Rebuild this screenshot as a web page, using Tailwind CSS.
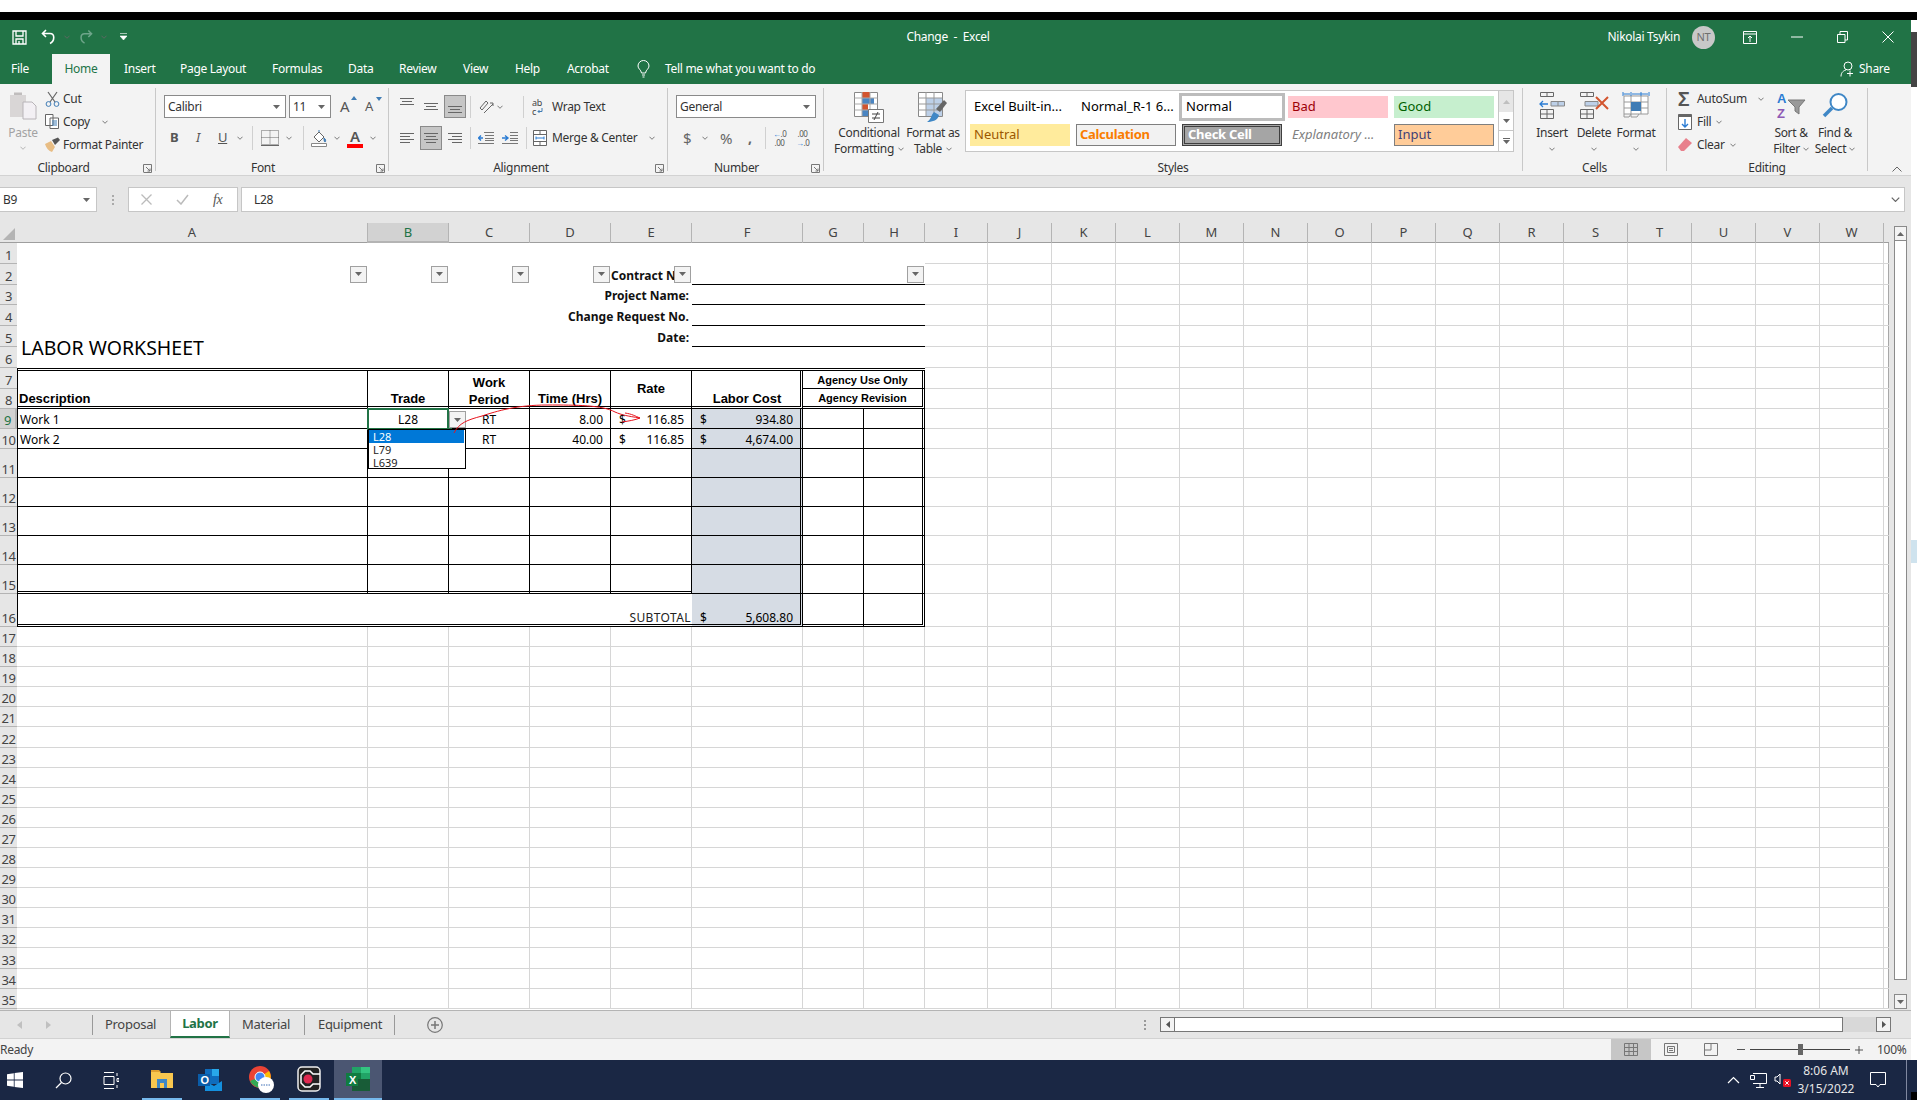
<!DOCTYPE html>
<html lang="en">
<head>
<meta charset="utf-8">
<title>Change - Excel</title>
<script src="https://cdn.jsdelivr.net/npm/@tailwindcss/browser@4"></script>
</head>
<body class="bg-white overflow-hidden font-['Noto_Sans',sans-serif] text-[12px] text-[#333] tracking-[-0.3px]">
<svg class="hidden">
  <symbol id="chev" viewBox="0 0 7 4"><path d="M.5.5 3.5 3.5 6.5.5" fill="none" stroke="#666"/></symbol>
  <symbol id="launch" viewBox="0 0 9 9"><path d="M.5 8V.5H8.5V8.500H.5M3 3 7 7M7 4.500V7H4.500" fill="none" stroke="#777"/></symbol>
  <symbol id="tri" viewBox="0 0 7 4"><path d="M0 0H7L3.500 4Z" fill="#666"/></symbol>
  <symbol id="lines" viewBox="0 0 14 8"><path d="M0 .5H14M2 3.500H12M0 6.500H14" stroke="#666"/></symbol>
</svg>

<div class="flex h-[1060px]">
  <div class="w-[1911px] flex flex-col">
    <div class="h-[12px] bg-white"></div>
    <div class="h-[8px] bg-black"></div>

    <!-- title bar -->
    <header class="h-[34px] bg-[#217346] text-white flex items-center relative">
      <svg class="ml-[12px] w-[15px] h-[15px]" viewBox="0 0 15 15"><path d="M1 1H14V14H1Z M4 1V6H11V1M4 14V9H11V14M7 11V14" fill="none" stroke="#fff" stroke-width="1.300"/></svg>
      <svg class="ml-[14px] w-[16px] h-[16px]" viewBox="0 0 16 16"><path d="M5 1 1.500 4.500 5 8M2 4.500H9C14 4.500 14 12 9 14.500" fill="none" stroke="#fff" stroke-width="1.600"/></svg>
      <svg class="ml-[7px] w-[6px] h-[4px]"><use href="#chev"/></svg>
      <svg class="ml-[8px] w-[15px] h-[16px]" viewBox="0 0 16 16"><path d="M11 1 14.500 4.500 11 8M14 4.500H7C2 4.500 2 12 7 14.500" fill="none" stroke="#6ea58a" stroke-width="1.600"/></svg>
      <svg class="ml-[8px] w-[6px] h-[4px]"><use href="#chev"/></svg>
      <svg class="ml-[13px] w-[7px] h-[8px]" viewBox="0 0 7 8"><path d="M0 .5H7M0 3H7L3.500 7Z" fill="#fff" stroke="#fff" stroke-width=".6"/></svg>
      <div class="ml-[736px] w-[170px] text-center">Change&nbsp; -&nbsp; Excel</div>
      <div class="ml-[572px] w-[75px] text-right whitespace-nowrap">Nikolai Tsykin</div>
      <div class="ml-[12px] w-[23px] h-[23px] rounded-full bg-[#c8c8c8] text-[#6f6f6f] text-[11px] flex items-center justify-center">NT</div>
      <svg class="ml-[28px] w-[14px] h-[13px]" viewBox="0 0 14 13"><path d="M.5.5H13.500V12.500H.5ZM.5 3H13.500M7 11V5M5 7 7 5 9 7" fill="none" stroke="#fff"/></svg>
      <svg class="ml-[34px] w-[12px] h-[2px]" viewBox="0 0 12 2"><path d="M0 1H12" stroke="#fff"/></svg>
      <svg class="ml-[34px] w-[11px] h-[12px]" viewBox="0 0 11 12"><path d="M.5 3.500H8V11.500H.5ZM3 3.500V.5H10.500V9H8" fill="none" stroke="#fff"/></svg>
      <svg class="ml-[34px] w-[12px] h-[12px]" viewBox="0 0 12 12"><path d="M.5.5 11.500 11.500M11.500.5.5 11.500" stroke="#fff"/></svg>
    </header>

    <!-- ribbon tabs -->
    <nav class="h-[30px] bg-[#217346] text-white flex items-center">
      <span class="ml-[11px] w-[18px]">File</span>
      <span class="ml-[23px] w-[58px] h-full bg-[#f3f3f3] text-[#217346] flex items-center justify-center">Home</span>
      <span class="ml-[14px] w-[29px]">Insert</span>
      <span class="ml-[27px] w-[65px] whitespace-nowrap">Page Layout</span>
      <span class="ml-[27px] w-[49px]">Formulas</span>
      <span class="ml-[27px] w-[24px]">Data</span>
      <span class="ml-[27px] w-[37px]">Review</span>
      <span class="ml-[27px] w-[25px]">View</span>
      <span class="ml-[27px] w-[25px]">Help</span>
      <span class="ml-[27px] w-[43px]">Acrobat</span>
      <svg class="ml-[27px] w-[13px] h-[18px]" viewBox="0 0 13 18"><path d="M4.500 13C4 9.500 1 9 1 6a5.500 5.500 0 0 1 11 0C12 9 9 9.500 8.500 13ZM5 15H8M5.500 17H7.500" fill="none" stroke="#fff"/></svg>
      <span class="ml-[15px] w-[150px] whitespace-nowrap">Tell me what you want to do</span>
      <svg class="ml-[1025px] w-[15px] h-[16px]" viewBox="0 0 15 16"><circle cx="8" cy="5" r="4" fill="none" stroke="#fff"/><path d="M1 15.500C1 11 4 9.500 6 9M10 9.500V15.500M7 12.500H13" fill="none" stroke="#fff"/></svg>
      <span class="ml-[4px] w-[30px]">Share</span>
    </nav>

    <!-- ribbon -->
    <section class="h-[92px] bg-[#f3f3f3] border-b border-[#d2d2d2] py-[4px] flex">
      <!-- Clipboard -->
      <div class="w-[156px] border-r border-[#c8c8c8] flex flex-col">
        <div class="flex-1 flex -mt-[1px]">
          <div class="ml-[6px] w-[34px] flex flex-col items-center pt-[4px]">
            <svg class="w-[30px] h-[32px]" viewBox="0 0 30 32"><path d="M2 4H18V26H2Z" fill="#d9d6d6"/><path d="M6 4H14V1.500H6Z" fill="#c0bdbd"/><path d="M15 11H24L28 15V28H15Z" fill="#f3f0f4" stroke="#b8b4b8"/></svg>
            <span class="text-[#a3a3a3] leading-[14px] mt-[3px]">Paste</span>
            <svg class="w-[6px] h-[4px] mt-[6px] opacity-50"><use href="#chev"/></svg>
          </div>
          <div class="ml-[5px] flex flex-col">
            <div class="h-[23px] flex items-center">
              <svg class="w-[15px] h-[16px]" viewBox="0 0 15 16"><path d="M3 1 10 11M12 1 5 11" stroke="#666" stroke-width="1.200"/><circle cx="3.500" cy="13" r="2.400" fill="none" stroke="#3f7cb5"/><circle cx="11.500" cy="13" r="2.400" fill="none" stroke="#3f7cb5"/></svg>
              <span class="ml-[3px]">Cut</span>
            </div>
            <div class="h-[23px] flex items-center">
              <svg class="w-[14px] h-[15px]" viewBox="0 0 14 15"><path d="M.5.5H8V11.500H.5ZM5 4H13.500V14.500H5Z" fill="#fff" stroke="#666"/><path d="M7 7H12M7 9H12M7 11H12" stroke="#3f7cb5"/></svg>
              <span class="ml-[4px]">Copy</span>
              <svg class="ml-[12px] w-[6px] h-[4px]"><use href="#chev"/></svg>
            </div>
            <div class="h-[23px] flex items-center">
              <svg class="w-[16px] h-[15px]" viewBox="0 0 16 15"><path d="M0 7 6 4 10 10 7 15C4 14 1 11 0 7Z" fill="#e8bd84"/><path d="M7 3 13 .5 15 3 10 8Z" fill="#555"/></svg>
              <span class="ml-[2px] whitespace-nowrap">Format Painter</span>
            </div>
          </div>
        </div>
        <div class="relative h-[14px] leading-[22px] text-center pr-[28px]">Clipboard<svg class="absolute right-[3px] top-[7px] w-[9px] h-[9px]"><use href="#launch"/></svg></div>
      </div>

      <!-- Font -->
      <div class="w-[233px] border-r border-[#c8c8c8] flex flex-col">
        <div class="flex-1 pt-[7px] pl-[8px]">
          <div class="flex h-[23px] items-center">
            <div class="w-[122px] h-[23px] bg-white border border-[#8a8a8a] flex items-center justify-between px-[3px]"><span>Calibri</span><svg class="w-[7px] h-[4px] mr-[2px]"><use href="#tri"/></svg></div>
            <div class="ml-[3px] w-[42px] h-[23px] bg-white border border-[#8a8a8a] flex items-center justify-between px-[3px]"><span>11</span><svg class="w-[7px] h-[4px] mr-[2px]"><use href="#tri"/></svg></div>
            <span class="ml-[9px] w-[14px] text-[15px] text-[#555] leading-none relative">A<span class="absolute -top-[3px] -right-[3px] border-x-[3px] border-x-transparent border-b-[4px] border-b-[#3f7cb5]"></span></span>
            <span class="ml-[11px] w-[14px] text-[13px] text-[#555] leading-none relative">A<span class="absolute -top-[3px] -right-[3px] border-x-[3px] border-x-transparent border-t-[4px] border-t-[#3f7cb5]"></span></span>
          </div>
          <div class="flex h-[24px] mt-[8px] items-center">
            <span class="ml-[6px] w-[10px] font-bold text-[13px] text-[#555]">B</span>
            <span class="ml-[16px] w-[8px] italic text-[13px] text-[#555]">I</span>
            <span class="ml-[14px] w-[10px] underline text-[13px] text-[#555]">U</span>
            <svg class="ml-[9px] w-[6px] h-[4px]"><use href="#chev"/></svg>
            <span class="ml-[9px] w-px h-[24px] bg-[#d0d0d0]"></span>
            <svg class="ml-[8px] w-[18px] h-[16px]" viewBox="0 0 18 16"><path d="M.5.5H17.500V14.500H.5ZM9 .5V14.500M.5 7.500H17.500" fill="none" stroke="#666" stroke-dasharray="1 1"/><path d="M0 15.500H18" stroke="#666"/></svg>
            <svg class="ml-[7px] w-[6px] h-[4px]"><use href="#chev"/></svg>
            <span class="ml-[11px] w-px h-[24px] bg-[#d0d0d0]"></span>
            <svg class="ml-[7px] w-[16px] h-[18px]" viewBox="0 0 16 18"><path d="M3 8 8 3 13 8 8 13Z" fill="#fff" stroke="#666"/><path d="M8 3V1M13 9C15 10 15 13 14 13 13 13 13 10 13 9Z" stroke="#3f7cb5" fill="#3f7cb5"/><path d="M.5 14.500H15.500V17.500H.5Z" fill="#fff" stroke="#888"/></svg>
            <svg class="ml-[7px] w-[6px] h-[4px]"><use href="#chev"/></svg>
            <span class="ml-[7px] w-[16px] h-[20px] relative text-center text-[15px] leading-[17px] font-semibold text-[#555]">A<span class="absolute left-0 right-0 bottom-0 h-[4px] bg-[#f00]"></span></span>
            <svg class="ml-[7px] w-[6px] h-[4px]"><use href="#chev"/></svg>
          </div>
        </div>
        <div class="relative h-[14px] leading-[22px] text-center pr-[18px]">Font<svg class="absolute right-[3px] top-[7px] w-[9px] h-[9px]"><use href="#launch"/></svg></div>
      </div>

      <!-- Alignment -->
      <div class="w-[279px] border-r border-[#c8c8c8] flex flex-col">
        <div class="flex-1 pt-[7px] pl-[11px]">
          <div class="flex h-[23px] items-center">
            <svg class="w-[14px] h-[8px] self-start mt-[3px]"><use href="#lines"/></svg>
            <svg class="ml-[10px] w-[14px] h-[8px]"><use href="#lines"/></svg>
            <span class="ml-[6px] w-[22px] h-[23px] bg-[#c6c6c6] border border-[#8a8a8a] flex items-end justify-center pb-[3px]"><svg class="w-[14px] h-[8px]"><use href="#lines"/></svg></span>
            <span class="ml-[4px] w-px h-[22px] bg-[#d0d0d0]"></span>
            <svg class="ml-[8px] w-[15px] h-[16px]" viewBox="0 0 15 16"><path d="M1 9 7 2 9 4 3 11ZM5 14 14 5M11 4H14V7" fill="none" stroke="#666"/></svg>
            <svg class="ml-[3px] w-[6px] h-[4px]"><use href="#chev"/></svg>
            <span class="ml-[20px] w-px h-[22px] bg-[#d0d0d0]"></span>
            <span class="ml-[8px] w-[13px] text-[9px] leading-[9px] text-[#444] flex flex-col"><span>ab</span><span class="flex items-center">c<svg class="ml-[1px] w-[6px] h-[6px]" viewBox="0 0 6 6"><path d="M5 0V3.500H1M2.500 2 1 3.500 2.500 5" fill="none" stroke="#3f7cb5"/></svg></span></span>
            <span class="ml-[7px] whitespace-nowrap">Wrap Text</span>
          </div>
          <div class="flex h-[24px] mt-[8px] items-center">
            <svg class="w-[14px] h-[10px]" viewBox="0 0 14 10"><path d="M0 .5H14M0 3.500H10M0 6.500H14M0 9.500H10" stroke="#666"/></svg>
            <span class="ml-[6px] w-[22px] h-[24px] bg-[#c6c6c6] border border-[#8a8a8a] flex items-center justify-center"><svg class="w-[14px] h-[10px]" viewBox="0 0 14 10"><path d="M0 .5H14M2 3.500H12M0 6.500H14M2 9.500H12" stroke="#666"/></svg></span>
            <svg class="ml-[6px] w-[14px] h-[10px]" viewBox="0 0 14 10"><path d="M0 .5H14M4 3.500H14M0 6.500H14M4 9.500H14" stroke="#666"/></svg>
            <span class="ml-[8px] w-px h-[22px] bg-[#d0d0d0]"></span>
            <svg class="ml-[7px] w-[16px] h-[12px]" viewBox="0 0 16 12"><path d="M6 .5H16M7 3.500H16M7 6.500H16M7 8.500H16M0 11.500H16" stroke="#777"/><path d="M5 6H1M3 3.500.5 6 3 8.500" fill="none" stroke="#2b7cd3" stroke-width="1.400"/></svg>
            <svg class="ml-[8px] w-[16px] h-[12px]" viewBox="0 0 16 12"><path d="M8 .5H16M8 3.500H16M8 6.500H16M8 8.500H16M0 11.500H16" stroke="#777"/><path d="M0 6H5M3 3.500 6 6 3 8.500" fill="none" stroke="#2b7cd3" stroke-width="1.400"/></svg>
            <span class="ml-[8px] w-px h-[22px] bg-[#d0d0d0]"></span>
            <svg class="ml-[6px] w-[14px] h-[16px]" viewBox="0 0 14 16"><path d="M.5.5H13.500V15.500H.5ZM.5 4.500H13.500M.5 11.500H13.500M7 .5V4.500M7 11.500V15.500" fill="#fff" stroke="#666"/><path d="M3 8H11M3 6.500V9.500M11 6.500V9.500" stroke="#2b7cd3"/></svg>
            <span class="ml-[5px] whitespace-nowrap">Merge &amp; Center</span>
            <svg class="ml-[12px] w-[6px] h-[4px]"><use href="#chev"/></svg>
          </div>
        </div>
        <div class="relative h-[14px] leading-[22px] text-center pr-[14px]">Alignment<svg class="absolute right-[3px] top-[7px] w-[9px] h-[9px]"><use href="#launch"/></svg></div>
      </div>

      <!-- Number -->
      <div class="w-[156px] border-r border-[#c8c8c8] flex flex-col">
        <div class="flex-1 pt-[7px] pl-[8px]">
          <div class="w-[140px] h-[23px] bg-white border border-[#8a8a8a] flex items-center justify-between px-[3px]"><span>General</span><svg class="w-[7px] h-[4px] mr-[2px]"><use href="#tri"/></svg></div>
          <div class="flex h-[24px] mt-[8px] items-center">
            <span class="ml-[7px] w-[8px] text-[15px] text-[#666]">$</span>
            <svg class="ml-[11px] w-[6px] h-[4px]"><use href="#chev"/></svg>
            <span class="ml-[12px] w-[14px] text-[15px] text-[#666]">%</span>
            <span class="ml-[14px] w-[6px] font-bold text-[14px] leading-[14px] text-[#666]">,</span>
            <span class="ml-[11px] w-px h-[22px] bg-[#d0d0d0]"></span>
            <span class="ml-[7px] w-[15px] text-[8px] leading-[9px] tracking-[-0.5px] text-[#555] whitespace-nowrap"><span class="text-[#2b7cd3] font-bold">←</span>.0<br>&nbsp;.00</span>
            <span class="ml-[8px] w-[15px] text-[8px] leading-[9px] tracking-[-0.5px] text-[#555] whitespace-nowrap">&nbsp;.00<br><span class="text-[#2b7cd3] font-bold">→</span>.0</span>
          </div>
        </div>
        <div class="relative h-[14px] leading-[22px] text-center pr-[18px]">Number<svg class="absolute right-[3px] top-[7px] w-[9px] h-[9px]"><use href="#launch"/></svg></div>
      </div>

      <!-- Styles -->
      <div class="w-[699px] border-r border-[#c8c8c8] flex flex-col">
        <div class="flex-1 flex">
          <div class="ml-[13px] w-[64px] flex flex-col items-center leading-[16px] pt-[4px]">
            <svg class="w-[30px] h-[31px]" viewBox="0 0 30 31"><path d="M.5.5H23.500V24.500H.5Z" fill="#fff" stroke="#888"/><path d="M8 0H16V6H8Z" fill="#d2552f"/><path d="M8 6H20V12H8Z" fill="#4a85c2"/><path d="M8 12H14V18H8Z" fill="#d2552f"/><path d="M8 18H17V24H8Z" fill="#4a85c2"/><path d="M.5 6H23.500M.5 12H23.500M.5 18H23.500M8 0V24M16 0V24" stroke="#aaa" fill="none"/><path d="M14.500 17.500H29.500V30.500H14.500Z" fill="#fff" stroke="#777"/><path d="M18 22H26M18 26H26M24 20 20 28" stroke="#444" fill="none"/></svg>
            <span class="mt-[2px] whitespace-nowrap">Conditional</span>
            <span class="whitespace-nowrap flex items-center">Formatting<svg class="ml-[4px] w-[6px] h-[4px]"><use href="#chev"/></svg></span>
          </div>
          <div class="w-[64px] flex flex-col items-center leading-[16px] pt-[4px]">
            <svg class="w-[30px] h-[31px]" viewBox="0 0 30 31"><path d="M.5.5H24.500V24.500H.5Z" fill="#fff" stroke="#888"/><path d="M8 6H24V24H8Z" fill="#bdd0e8"/><path d="M.5 6H24.500M.5 12H24.500M.5 18H24.500M8 0V24M16 0V24" stroke="#999" fill="none"/><path d="M18 17 26 8 29 11 22 20Z" fill="#666"/><path d="M16 20 21 23C20 28 15 30 9 30 13 28 13 23 16 20Z" fill="#3f87c6"/></svg>
            <span class="mt-[2px] whitespace-nowrap">Format as</span>
            <span class="whitespace-nowrap flex items-center">Table<svg class="ml-[4px] w-[6px] h-[4px]"><use href="#chev"/></svg></span>
          </div>
          <div class="h-[62px] mt-[2px] flex border border-[#c6c6c6] bg-white tracking-normal">
            <div class="w-[532px] px-[4px] pt-[5px] grid grid-cols-[100px_100px_100px_100px_100px] grid-rows-[22px_22px] gap-x-[6px] gap-y-[6px] text-[13px] text-[#222]">
              <div class="flex items-center px-[4px] text-black whitespace-nowrap">Excel Built-in...</div>
              <div class="flex items-center pl-[5px] text-black whitespace-nowrap">Normal_R-1 6...</div>
              <div class="flex items-center px-[4px] text-black bg-white outline outline-[3px] outline-[#bcbcbc]">Normal</div>
              <div class="flex items-center px-[4px] bg-[#ffc7ce] text-[#9c0006]">Bad</div>
              <div class="flex items-center px-[4px] bg-[#c6efce] text-[#006100]">Good</div>
              <div class="flex items-center px-[4px] bg-[#ffeb9c] text-[#9c5700]">Neutral</div>
              <div class="flex items-center px-[3px] bg-[#f2f2f2] border border-[#7f7f7f] text-[#fa7d00] font-bold tracking-[-0.3px]">Calculation</div>
              <div class="flex items-center px-[3px] bg-[#a5a5a5] border-[3px] border-double border-[#3f3f3f] text-white font-bold tracking-[-0.3px]">Check Cell</div>
              <div class="flex items-center px-[4px] italic text-[#7f7f7f] whitespace-nowrap">Explanatory ...</div>
              <div class="flex items-center px-[3px] bg-[#ffcc99] border border-[#7f7f7f] text-[#3f3f76]">Input</div>
            </div>
          </div>
          <div class="w-[15px] h-[62px] mt-[2px] border-y border-r border-[#c6c6c6] flex flex-col">
            <div class="h-[21px] bg-[#e6e6e6] flex items-center justify-center"><svg class="w-[7px] h-[4px] rotate-180 opacity-30"><use href="#tri"/></svg></div>
            <div class="h-[19px] bg-white flex items-center justify-center border-b border-[#c6c6c6]"><svg class="w-[7px] h-[4px]"><use href="#tri"/></svg></div>
            <div class="flex-1 bg-white flex flex-col items-center justify-center"><span class="w-[7px] h-px bg-[#666] mb-[1px]"></span><svg class="w-[7px] h-[4px]"><use href="#tri"/></svg></div>
          </div>
        </div>
        <div class="h-[14px] leading-[22px] text-center">Styles</div>
      </div>

      <!-- Cells -->
      <div class="w-[144px] border-r border-[#c8c8c8] flex flex-col">
        <div class="flex-1 flex pl-[8px] pt-[4px]">
          <div class="w-[42px] flex flex-col items-center">
            <svg class="w-[26px] h-[27px]" viewBox="0 0 26 27"><path d="M1.500.5H14.500V4.500H1.500ZM8 .5V4.500M1.500 17.500H14.500V26.500H1.500ZM1.500 22H14.500M8 17.500V26.500" fill="none" stroke="#666"/><path d="M12 9.500H25.500V14H12ZM19 9.500V14" fill="#bdd0e8" stroke="#888"/><path d="M9 12H1M4 9 1 12 4 15" fill="none" stroke="#2b7cd3" stroke-width="1.300"/></svg>
            <span class="leading-[16px] mt-[6px]">Insert</span>
            <svg class="w-[6px] h-[4px] mt-[6px]"><use href="#chev"/></svg>
          </div>
          <div class="w-[42px] flex flex-col items-center">
            <svg class="w-[30px] h-[27px]" viewBox="0 0 30 27"><path d="M1.500.5H14.500V4.500H1.500ZM8 .5V4.500M1.500 17.500H14.500V26.500H1.500ZM1.500 22H14.500M8 17.500V26.500" fill="none" stroke="#666"/><path d="M6 9.500H19V14H6Z" fill="#bdd0e8" stroke="#888"/><path d="M17 5 29 17M29 5 17 17" stroke="#d2552f" stroke-width="2"/></svg>
            <span class="leading-[16px] mt-[6px]">Delete</span>
            <svg class="w-[6px] h-[4px] mt-[6px]"><use href="#chev"/></svg>
          </div>
          <div class="w-[42px] flex flex-col items-center">
            <svg class="w-[28px] h-[27px]" viewBox="0 0 28 27"><path d="M2 4H26V22H2ZM2 10H26M2 16H26M9 4V22M19 4V22" fill="#fff" stroke="#999"/><path d="M9 10H19V19H9Z" fill="#3f7cb5"/><path d="M1 0V4M9 0V4M1.500 2H8" stroke="#2b7cd3" fill="none"/><path d="M19 0V4M27 0V4M10 2H26" stroke="#2b7cd3" fill="none"/><path d="M2 22V25H7L9 22V25H15L17 22" fill="none" stroke="#999"/></svg>
            <span class="leading-[16px] mt-[6px]">Format</span>
            <svg class="w-[6px] h-[4px] mt-[6px]"><use href="#chev"/></svg>
          </div>
        </div>
        <div class="h-[14px] leading-[22px] text-center">Cells</div>
      </div>

      <!-- Editing -->
      <div class="w-[201px] border-r border-[#c8c8c8] flex flex-col">
        <div class="flex-1 flex -mt-[1px] pl-[11px]">
          <div class="w-[91px] flex flex-col">
            <div class="h-[23px] flex items-center">
              <span class="w-[19px] text-[20px] leading-none text-[#555] font-semibold">Σ</span>
              <span>AutoSum</span>
              <svg class="ml-[11px] w-[6px] h-[4px]"><use href="#chev"/></svg>
            </div>
            <div class="h-[23px] flex items-center">
              <svg class="w-[14px] h-[16px] mr-[5px]" viewBox="0 0 14 16"><path d="M.5.5H13.500V15.500H.5Z" fill="#fff" stroke="#666"/><path d="M.5.5H13.500V3H.5Z" fill="#666"/><path d="M7 5V13M4 10 7 13 10 10" fill="none" stroke="#2b7cd3" stroke-width="1.400"/></svg>
              <span>Fill</span>
              <svg class="ml-[5px] w-[6px] h-[4px]"><use href="#chev"/></svg>
            </div>
            <div class="h-[23px] flex items-center">
              <svg class="w-[14px] h-[13px] mr-[5px]" viewBox="0 0 14 13"><path d="M0 9 8 0 14 5 6 13H3Z" fill="#e8808c"/></svg>
              <span>Clear</span>
              <svg class="ml-[5px] w-[6px] h-[4px]"><use href="#chev"/></svg>
            </div>
          </div>
          <div class="w-[44px] flex flex-col items-center pt-[5px]">
            <svg class="w-[30px] h-[27px]" viewBox="0 0 30 27"><text x="1" y="11" font-size="13" font-weight="700" fill="#2b7cd3" font-family="Liberation Sans">A</text><text x="1" y="26" font-size="13" font-weight="700" fill="#8e5ab5" font-family="Liberation Sans">Z</text><path d="M12 8H29L23 15V22L19 19V15Z" fill="#999" stroke="#777"/></svg>
            <span class="leading-[16px] mt-[6px] whitespace-nowrap">Sort &amp;</span>
            <span class="leading-[16px] whitespace-nowrap flex items-center">Filter<svg class="ml-[3px] w-[6px] h-[4px]"><use href="#chev"/></svg></span>
          </div>
          <div class="w-[44px] flex flex-col items-center pt-[5px]">
            <svg class="w-[27px] h-[27px]" viewBox="0 0 27 27"><circle cx="16.500" cy="10" r="8" fill="#fff" stroke="#3f87c6" stroke-width="2"/><path d="M10 16 2 24" stroke="#3f87c6" stroke-width="3.500"/></svg>
            <span class="leading-[16px] mt-[6px] whitespace-nowrap">Find &amp;</span>
            <span class="leading-[16px] whitespace-nowrap flex items-center">Select<svg class="ml-[3px] w-[6px] h-[4px]"><use href="#chev"/></svg></span>
          </div>
        </div>
        <div class="h-[14px] leading-[22px] text-center">Editing</div>
      </div>
      <div class="flex-1 flex items-end justify-center pl-[15px] -mb-[1px]"><svg class="w-[10px] h-[6px]" viewBox="0 0 10 6"><path d="M.5 5.500 5 1 9.500 5.500" fill="none" stroke="#666"/></svg></div>
    </section>

    <!-- formula bar -->
    <section class="h-[47px] bg-[#e6e6e6] pt-[11px] flex items-start">
      <div class="w-[97px] h-[25px] bg-white border border-[#c6c6c6] border-l-0 flex items-center justify-between pl-[3px] pr-[6px]"><span>B9</span><svg class="w-[7px] h-[4px]"><use href="#tri"/></svg></div>
      <div class="ml-[15px] w-[3px] h-[25px] flex flex-col justify-center gap-[2px]"><i class="w-[2px] h-[2px] bg-[#aaa]"></i><i class="w-[2px] h-[2px] bg-[#aaa]"></i><i class="w-[2px] h-[2px] bg-[#aaa]"></i></div>
      <div class="ml-[13px] w-[110px] h-[25px] bg-white border border-[#c6c6c6] flex items-center">
        <svg class="ml-[12px] w-[11px] h-[11px]" viewBox="0 0 11 11"><path d="M.5.5 10.500 10.500M10.500.5.5 10.500" stroke="#bbb" stroke-width="1.300"/></svg>
        <svg class="ml-[24px] w-[13px] h-[11px]" viewBox="0 0 13 11"><path d="M1 6 5 10 12 1" fill="none" stroke="#bbb" stroke-width="1.500"/></svg>
        <span class="ml-[24px] italic font-['Liberation_Serif',serif] text-[14px] text-[#555]">fx</span>
      </div>
      <div class="ml-[3px] w-[1664px] h-[25px] bg-white border border-[#c6c6c6] flex items-center justify-between pl-[12px] pr-[4px]"><span>L28</span><svg class="w-[9px] h-[5px]"><use href="#chev"/></svg></div>
    </section>

    <!-- sheet -->
    <section class="h-[787px] bg-[#e6e6e6] flex tracking-normal">
      <div class="w-[1889px] flex flex-col">
        <!-- column headers -->
        <div class="h-[20px] grid grid-cols-[17px_351px_81px_81px_81px_81px_111px_61px_61px_63px_repeat(14,64px)_5px] border-b border-[#9e9e9e] text-[13px] text-[#444] leading-[19px] text-center [&>*]:border-r [&>*]:border-[#b4b4b4]">
          <div class="flex items-end justify-end p-[3px] pr-[2px] !border-r-0"><i class="block w-0 h-0 border-l-[12px] border-l-transparent border-b-[12px] border-b-[#b4b4b4]"></i></div>
          <div>A</div>
          <div class="bg-[#d2d2d2] text-[#217346] border-b-2 border-b-[#217346] h-[20px]">B</div>
          <div>C</div><div>D</div><div>E</div><div>F</div><div>G</div><div>H</div><div>I</div><div>J</div><div>K</div><div>L</div><div>M</div><div>N</div><div>O</div><div>P</div><div>Q</div><div>R</div><div>S</div><div>T</div><div>U</div><div>V</div><div>W</div><div class="!border-r-0"></div>
        </div>
        <div class="flex flex-1">
          <!-- row headers -->
          <div class="w-[17px] grid grid-rows-[repeat(6,20.83px)_21px_20px_20px_20px_29px_29px_29px_29px_29px_33px_repeat(19,20.1px)] text-[13px] text-[#444] [&>*]:flex [&>*]:items-end [&>*]:justify-center [&>*]:leading-[16px] [&>*]:border-b [&>*]:border-[#b4b4b4] [&>*]:tracking-[-0.5px]">
            <div>1</div><div>2</div><div>3</div><div>4</div><div>5</div><div>6</div><div>7</div><div>8</div>
            <div class="bg-[#d2d2d2] text-[#217346] border-r-2 border-r-[#217346]">9</div>
            <div>10</div><div>11</div><div>12</div><div>13</div><div>14</div><div>15</div><div>16</div><div>17</div><div>18</div><div>19</div><div>20</div><div>21</div><div>22</div><div>23</div><div>24</div><div>25</div><div>26</div><div>27</div><div>28</div><div>29</div><div>30</div><div>31</div><div>32</div><div>33</div><div>34</div><div>35</div>
          </div>

          <!-- cells -->
          <div class="relative w-[1872px] bg-white grid grid-cols-[351px_81px_81px_81px_81px_111px_61px_61px_63px_repeat(14,64px)_5px] grid-rows-[repeat(6,20.83px)_21px_20px_20px_20px_29px_29px_29px_29px_29px_33px_repeat(19,20.1px)]">
            <!-- vertical gridlines -->
            <i class="row-span-full col-start-1 border-r border-[#d6d6d6]"></i><i class="row-span-full col-start-2 border-r border-[#d6d6d6]"></i><i class="row-span-full col-start-3 border-r border-[#d6d6d6]"></i><i class="row-span-full col-start-4 border-r border-[#d6d6d6]"></i><i class="row-span-full col-start-5 border-r border-[#d6d6d6]"></i><i class="row-span-full col-start-6 border-r border-[#d6d6d6]"></i><i class="row-span-full col-start-7 border-r border-[#d6d6d6]"></i><i class="row-span-full col-start-8 border-r border-[#d6d6d6]"></i><i class="row-span-full col-start-9 border-r border-[#d6d6d6]"></i><i class="row-span-full col-start-10 border-r border-[#d6d6d6]"></i><i class="row-span-full col-start-11 border-r border-[#d6d6d6]"></i><i class="row-span-full col-start-12 border-r border-[#d6d6d6]"></i><i class="row-span-full col-start-13 border-r border-[#d6d6d6]"></i><i class="row-span-full col-start-14 border-r border-[#d6d6d6]"></i><i class="row-span-full col-start-15 border-r border-[#d6d6d6]"></i><i class="row-span-full col-start-16 border-r border-[#d6d6d6]"></i><i class="row-span-full col-start-17 border-r border-[#d6d6d6]"></i><i class="row-span-full col-start-18 border-r border-[#d6d6d6]"></i><i class="row-span-full col-start-19 border-r border-[#d6d6d6]"></i><i class="row-span-full col-start-20 border-r border-[#d6d6d6]"></i><i class="row-span-full col-start-21 border-r border-[#d6d6d6]"></i><i class="row-span-full col-start-22 border-r border-[#d6d6d6]"></i><i class="row-span-full col-start-23 border-r border-[#d6d6d6]"></i><i class="row-span-full col-start-24 border-r border-[#a8a8a8]"></i>
            <!-- horizontal gridlines -->
            <i class="col-start-9 col-end-[-1] row-start-1 border-b border-[#d6d6d6]"></i><i class="col-start-9 col-end-[-1] row-start-2 border-b border-[#d6d6d6]"></i><i class="col-start-9 col-end-[-1] row-start-3 border-b border-[#d6d6d6]"></i><i class="col-start-9 col-end-[-1] row-start-4 border-b border-[#d6d6d6]"></i><i class="col-start-9 col-end-[-1] row-start-5 border-b border-[#d6d6d6]"></i><i class="col-start-9 col-end-[-1] row-start-6 border-b border-[#d6d6d6]"></i><i class="col-start-9 col-end-[-1] row-start-7 border-b border-[#d6d6d6]"></i><i class="col-start-9 col-end-[-1] row-start-8 border-b border-[#d6d6d6]"></i><i class="col-start-9 col-end-[-1] row-start-9 border-b border-[#d6d6d6]"></i><i class="col-start-9 col-end-[-1] row-start-10 border-b border-[#d6d6d6]"></i><i class="col-start-9 col-end-[-1] row-start-11 border-b border-[#d6d6d6]"></i><i class="col-start-9 col-end-[-1] row-start-12 border-b border-[#d6d6d6]"></i><i class="col-start-9 col-end-[-1] row-start-13 border-b border-[#d6d6d6]"></i><i class="col-start-9 col-end-[-1] row-start-14 border-b border-[#d6d6d6]"></i><i class="col-start-9 col-end-[-1] row-start-15 border-b border-[#d6d6d6]"></i><i class="col-start-9 col-end-[-1] row-start-16 border-b border-[#d6d6d6]"></i>
            <i class="col-span-full row-start-17 border-b border-[#d6d6d6]"></i><i class="col-span-full row-start-18 border-b border-[#d6d6d6]"></i><i class="col-span-full row-start-19 border-b border-[#d6d6d6]"></i><i class="col-span-full row-start-20 border-b border-[#d6d6d6]"></i><i class="col-span-full row-start-21 border-b border-[#d6d6d6]"></i><i class="col-span-full row-start-22 border-b border-[#d6d6d6]"></i><i class="col-span-full row-start-23 border-b border-[#d6d6d6]"></i><i class="col-span-full row-start-24 border-b border-[#d6d6d6]"></i><i class="col-span-full row-start-25 border-b border-[#d6d6d6]"></i><i class="col-span-full row-start-26 border-b border-[#d6d6d6]"></i><i class="col-span-full row-start-27 border-b border-[#d6d6d6]"></i><i class="col-span-full row-start-28 border-b border-[#d6d6d6]"></i><i class="col-span-full row-start-29 border-b border-[#d6d6d6]"></i><i class="col-span-full row-start-30 border-b border-[#d6d6d6]"></i><i class="col-span-full row-start-31 border-b border-[#d6d6d6]"></i><i class="col-span-full row-start-32 border-b border-[#d6d6d6]"></i><i class="col-span-full row-start-33 border-b border-[#d6d6d6]"></i><i class="col-span-full row-start-34 border-b border-[#d6d6d6]"></i><i class="col-span-full row-start-35 border-b border-[#d6d6d6]"></i>

            <!-- header form -->
            <div class="col-start-1 col-end-9 row-start-1 row-end-7 grid grid-cols-subgrid grid-rows-subgrid bg-white font-bold text-[12px] text-[#111]">
              <div class="col-start-5 row-start-2 whitespace-nowrap overflow-hidden flex items-center leading-none pt-[3px]">Contract No</div>
              <div class="col-start-4 col-end-6 row-start-3 text-right flex items-center justify-end pr-[3px] pt-[2px]">Project Name:</div>
              <div class="col-start-3 col-end-6 row-start-4 text-right flex items-center justify-end pr-[3px] pt-[2px]">Change Request No.</div>
              <div class="col-start-4 col-end-6 row-start-5 text-right flex items-center justify-end pr-[3px] pt-[2px]">Date:</div>
              <div class="col-start-6 col-end-9 row-start-2 border-b border-black"></div>
              <div class="col-start-6 col-end-9 row-start-3 border-b border-black"></div>
              <div class="col-start-6 col-end-9 row-start-4 border-b border-black"></div>
              <div class="col-start-6 col-end-9 row-start-5 border-b border-black"></div>
              <div class="col-start-1 row-start-5 row-span-2 flex items-center pl-[4px] pt-[1px] text-[19.5px] font-normal text-black whitespace-nowrap">LABOR WORKSHEET</div>
              <div class="col-start-1 row-start-2 justify-self-end self-center mr-[1px] w-[17px] h-[17px] bg-[#f3f3f3] border border-[#a0a0a0] flex items-center justify-center"><svg class="w-[7px] h-[4px]"><use href="#tri"/></svg></div>
              <div class="col-start-2 row-start-2 justify-self-end self-center mr-[1px] w-[17px] h-[17px] bg-[#f3f3f3] border border-[#a0a0a0] flex items-center justify-center"><svg class="w-[7px] h-[4px]"><use href="#tri"/></svg></div>
              <div class="col-start-3 row-start-2 justify-self-end self-center mr-[1px] w-[17px] h-[17px] bg-[#f3f3f3] border border-[#a0a0a0] flex items-center justify-center"><svg class="w-[7px] h-[4px]"><use href="#tri"/></svg></div>
              <div class="col-start-4 row-start-2 justify-self-end self-center mr-[1px] w-[17px] h-[17px] bg-[#f3f3f3] border border-[#a0a0a0] flex items-center justify-center"><svg class="w-[7px] h-[4px]"><use href="#tri"/></svg></div>
              <div class="col-start-5 row-start-2 justify-self-end self-center mr-[1px] w-[17px] h-[17px] bg-[#f3f3f3] border border-[#a0a0a0] flex items-center justify-center"><svg class="w-[7px] h-[4px]"><use href="#tri"/></svg></div>
              <div class="col-start-8 row-start-2 justify-self-end self-center mr-[1px] w-[17px] h-[17px] bg-[#f3f3f3] border border-[#a0a0a0] flex items-center justify-center"><svg class="w-[7px] h-[4px]"><use href="#tri"/></svg></div>
            </div>

            <!-- labor table -->
            <div class="col-start-1 col-end-9 row-start-7 row-end-17 grid grid-cols-subgrid grid-rows-subgrid bg-white border-l border-black border-t-[3px] border-double text-black [&>*]:border-r [&>*]:border-b [&>*]:border-black [&>*]:min-w-0">
              <div class="col-start-1 row-start-1 row-span-2 font-['Liberation_Sans',sans-serif] font-bold text-[13px] leading-[13px] flex items-end pl-[1px] pb-[1px] !border-b-[3px] !border-double">Description</div>
              <div class="col-start-2 row-start-1 row-span-2 font-['Liberation_Sans',sans-serif] font-bold text-[13px] leading-[13px] flex items-end justify-center pb-[1px] !border-b-[3px] !border-double">Trade</div>
              <div class="col-start-3 row-start-1 row-span-2 font-['Liberation_Sans',sans-serif] font-bold text-[13px] leading-[17px] text-center flex flex-col justify-end !border-b-[3px] !border-double"><span class="translate-y-[2px]">Work<br>Period</span></div>
              <div class="col-start-4 row-start-1 row-span-2 font-['Liberation_Sans',sans-serif] font-bold text-[13px] leading-[13px] flex items-end justify-center pb-[1px] !border-b-[3px] !border-double">Time (Hrs)</div>
              <div class="col-start-5 row-start-1 row-span-2 font-['Liberation_Sans',sans-serif] font-bold text-[13px] flex items-center justify-center !border-b-[3px] !border-double">Rate</div>
              <div class="col-start-6 row-start-1 row-span-2 font-['Liberation_Sans',sans-serif] font-bold text-[13px] leading-[13px] flex items-end justify-center pb-[1px] pl-[2px] !border-b-[3px] !border-double !border-r-[3px]">Labor Cost</div>
              <div class="col-start-7 col-end-9 row-start-1 font-['Liberation_Sans',sans-serif] font-bold text-[11px] flex items-center justify-center pt-[2px] !border-r-[3px] !border-double">Agency Use Only</div>
              <div class="col-start-7 col-end-9 row-start-2 font-['Liberation_Sans',sans-serif] font-bold text-[11px] flex items-center justify-center pt-[1px] !border-r-[3px] !border-b-[3px] !border-double">Agency Revision</div>

              <div class="flex items-center pl-[2px] pt-[3px] overflow-hidden">Work 1</div><div class="flex items-center justify-center pt-[3px]">L28</div><div class="flex items-center justify-center pt-[3px]">RT</div><div class="flex items-center justify-end pr-[7px] pt-[3px]">8.00</div><div class="flex items-center justify-between pl-[8px] pr-[7px] pt-[3px]"><span>$</span><span>116.85</span></div><div class="flex items-center justify-between pl-[8px] pr-[7px] pt-[3px] bg-[#d6dce4] !border-r-[3px] !border-double"><span>$</span><span>934.80</span></div><div></div><div class="!border-r-[3px] !border-double"></div>
              <div class="flex items-center pl-[2px] pt-[3px]">Work 2</div><div class="flex items-center justify-center pt-[3px]">L28</div><div class="flex items-center justify-center pt-[3px]">RT</div><div class="flex items-center justify-end pr-[7px] pt-[3px]">40.00</div><div class="flex items-center justify-between pl-[8px] pr-[7px] pt-[3px]"><span>$</span><span>116.85</span></div><div class="flex items-center justify-between pl-[8px] pr-[7px] pt-[3px] bg-[#d6dce4] !border-r-[3px] !border-double"><span>$</span><span>4,674.00</span></div><div></div><div class="!border-r-[3px] !border-double"></div>
              <div></div><div></div><div></div><div></div><div></div><div class="bg-[#d6dce4] !border-r-[3px] !border-double"></div><div></div><div class="!border-r-[3px] !border-double"></div>
              <div></div><div></div><div></div><div></div><div></div><div class="bg-[#d6dce4] !border-r-[3px] !border-double"></div><div></div><div class="!border-r-[3px] !border-double"></div>
              <div></div><div></div><div></div><div></div><div></div><div class="bg-[#d6dce4] !border-r-[3px] !border-double"></div><div></div><div class="!border-r-[3px] !border-double"></div>
              <div></div><div></div><div></div><div></div><div></div><div class="bg-[#d6dce4] !border-r-[3px] !border-double"></div><div></div><div class="!border-r-[3px] !border-double"></div>
              <div class="!border-b-[3px] !border-double"></div><div class="!border-b-[3px] !border-double"></div><div class="!border-b-[3px] !border-double"></div><div class="!border-b-[3px] !border-double"></div><div class="!border-b-[3px] !border-double"></div><div class="bg-[#d6dce4] !border-r-[3px] !border-double"></div><div></div><div class="!border-r-[3px] !border-double"></div>
              <div class="col-start-1 col-end-6 flex items-end justify-end leading-[13px] pr-[1px] tracking-[0.4px] !border-b-[3px] !border-double !border-r-0 text-[#222]">SUBTOTAL</div><div class="flex items-end justify-between leading-[13px] pl-[8px] pr-[7px] bg-[#d6dce4] !border-r-[3px] !border-b-[3px] !border-double"><span>$</span><span>5,608.80</span></div><div class="!border-b-[3px] !border-double"></div><div class="!border-r-[3px] !border-b-[3px] !border-double"></div>
            </div>

            <!-- active-cell overlays -->
            <div class="absolute left-[350px] top-[165px] w-[82px] h-[22px] border-2 border-[#217346] z-20"></div>
            <div class="absolute left-[431px] top-[185px] w-[4px] h-[2px] bg-[#217346] z-20"></div>
            <div class="absolute left-[432px] top-[168px] w-[17px] h-[17px] bg-[#f3f3f3] border border-[#a0a0a0] flex items-center justify-center z-20"><svg class="w-[7px] h-[4px]"><use href="#tri"/></svg></div>
            <div class="absolute left-[351px] top-[186px] w-[98px] h-[40px] bg-white border border-black z-20 text-[11px] leading-[13px] text-[#222] pl-0">
              <div class="bg-[#0078d7] text-white h-[13px] w-[95px] pl-[4px]">L28</div>
              <div class="pl-[4px]">L79</div>
              <div class="pl-[4px]">L639</div>
            </div>
            <svg class="absolute left-[430px] top-[155px] w-[200px] h-[40px] z-30" viewBox="0 0 200 40"><path d="M7 35C12 25 20 22 35 18 50 13 70 7 100 7 130 7 155 7 168 14 175 17 180 18 193 20 188 22 182 23 175 24 M193 20C188 18 185 16 178 15" fill="none" stroke="#e8141e" stroke-width="1"/></svg>
          </div>
        </div>
      </div>
      <!-- vertical scrollbar -->
      <div class="flex-1 pl-[5px] pr-[4px] pt-[3px] pb-[1px] bg-[#e6e6e6] flex flex-col">
        <div class="h-[15px] border border-[#8a8a8a] bg-[#f3f3f3] flex items-center justify-center"><svg class="w-[7px] h-[4px] rotate-180"><use href="#tri"/></svg></div>
        <div class="h-[739px] bg-white border border-[#8a8a8a] border-t-0"></div>
        <div class="flex-1"></div>
        <div class="h-[15px] border border-[#8a8a8a] bg-[#f3f3f3] flex items-center justify-center"><svg class="w-[7px] h-[4px]"><use href="#tri"/></svg></div>
      </div>
    </section>

    <!-- sheet tabs -->
    <section class="h-[28px] bg-[#e6e6e6] border-t border-[#b4b4b4] flex items-center text-[13px] text-[#444]">
      <span class="ml-[17px] w-0 h-0 border-y-[4px] border-y-transparent border-r-[5px] border-r-[#c0c0c0]"></span>
      <span class="ml-[24px] w-0 h-0 border-y-[4px] border-y-transparent border-l-[5px] border-l-[#c0c0c0]"></span>
      <span class="ml-[41px] w-px h-[20px] bg-[#999]"></span>
      <span class="ml-[12px] w-[65px]">Proposal</span>
      <span class="w-[60px] h-full bg-white border-x border-[#b4b4b4] border-b-2 border-b-[#217346] flex items-center justify-center font-bold text-[#217346]">Labor</span>
      <span class="ml-[12px] w-[50px]">Material</span>
      <span class="ml-[12px] w-px h-[20px] bg-[#999]"></span>
      <span class="ml-[13px] w-[63px]">Equipment</span>
      <span class="ml-[13px] w-px h-[20px] bg-[#999]"></span>
      <svg class="ml-[32px] w-[16px] h-[16px]" viewBox="0 0 16 16"><circle cx="8" cy="8" r="7.300" fill="none" stroke="#777" stroke-width="1.200"/><path d="M4 8H12M8 4V12" stroke="#777" stroke-width="1.500"/></svg>
      <span class="ml-[701px] w-[3px] h-[16px] flex flex-col justify-center gap-[2px]"><i class="w-[2px] h-[2px] bg-[#999]"></i><i class="w-[2px] h-[2px] bg-[#999]"></i><i class="w-[2px] h-[2px] bg-[#999]"></i></span>
      <div class="ml-[13px] w-[731px] h-[15px] flex">
        <span class="w-[15px] border border-[#777] bg-[#f3f3f3] flex items-center justify-center"><svg class="w-[4px] h-[7px] rotate-180" viewBox="0 0 4 7"><path d="M0 0 4 3.500 0 7Z" fill="#555"/></svg></span>
        <span class="w-[668px] border border-l-0 border-[#777] bg-white"></span>
        <span class="flex-1 bg-[#d8d8d8]"></span>
        <span class="w-[15px] border border-[#777] bg-[#f3f3f3] flex items-center justify-center"><svg class="w-[4px] h-[7px]" viewBox="0 0 4 7"><path d="M0 0 4 3.500 0 7Z" fill="#555"/></svg></span>
      </div>
    </section>

    <!-- status bar -->
    <footer class="h-[22px] bg-[#f3f3f3] border-t border-[#d2d2d2] flex items-center text-[#444]">
      <span class="w-[1611px]">Ready</span>
      <span class="w-[40px] h-full bg-[#c6c6c6] flex items-center justify-center"><svg class="w-[14px] h-[13px]" viewBox="0 0 14 13"><path d="M.5.5H13.500V12.500H.5ZM5 .5V12.500M9.500.5V12.500M.5 4.500H13.500M.5 8.500H13.500" fill="none" stroke="#777"/></svg></span>
      <span class="w-[40px] flex items-center justify-center"><svg class="w-[14px] h-[13px]" viewBox="0 0 14 13"><path d="M.5.5H13.500V12.500H.5ZM3.500 3.500H10.500V9.500H3.500ZM5 5.500H9M5 7.500H9" fill="none" stroke="#777"/></svg></span>
      <span class="w-[40px] flex items-center justify-center"><svg class="w-[14px] h-[13px]" viewBox="0 0 14 13"><path d="M.5.5H13.500V12.500H.5ZM.5 7H7V.5" fill="none" stroke="#777"/></svg></span>
      <span class="ml-[6px] w-[8px] h-px bg-[#555]"></span>
      <span class="ml-[5px] w-[100px] h-px bg-[#444] flex items-center justify-center"><i class="w-[5px] h-[11px] bg-[#666]"></i></span>
      <svg class="ml-[5px] w-[8px] h-[8px]" viewBox="0 0 8 8"><path d="M0 4H8M4 0V8" stroke="#555"/></svg>
      <span class="ml-[14px]">100%</span>
    </footer>
  </div>

  <!-- outside of the captured window -->
  <div class="flex-1 flex flex-col bg-white">
    <div class="h-[12px]"></div>
    <div class="h-[8px] bg-black"></div>
    <div class="h-[12px]"></div>
    <div class="h-[55px] bg-[#444]"></div>
    <div class="h-[453px]"></div>
    <div class="h-[23px] bg-[#cfe3ee]"></div>
    <div class="flex-1"></div>
  </div>
</div>

<!-- taskbar -->
<footer class="h-[40px] bg-[#1a2744] flex items-center text-white text-[12px] tracking-normal relative">
  <svg class="ml-[7px] w-[16px] h-[16px]" viewBox="0 0 16 16"><path d="M0 2.200 6.800 1.200V7.500H0ZM7.600 1.100 16 0V7.500H7.600ZM0 8.400H6.800V14.800L0 13.800ZM7.600 8.400H16V16L7.600 14.900Z" fill="#fff"/></svg>
  <svg class="ml-[32px] w-[17px] h-[17px]" viewBox="0 0 17 17"><circle cx="10.500" cy="6.500" r="5.500" fill="none" stroke="#fff" stroke-width="1.200"/><path d="M6.500 10.500 1 16" stroke="#fff" stroke-width="1.200"/></svg>
  <svg class="ml-[31px] w-[16px] h-[17px]" viewBox="0 0 16 17"><path d="M1 .5H11M1 16.500H11M1 4.500H11V12.500H1ZM14 1V4M14 6.500H16V9.500H14ZM14 13V16" fill="none" stroke="#fff"/></svg>
  <div class="ml-[23px] w-[40px] h-full flex items-center justify-center border-b-[2px] border-[#76b9ed] relative">
    <svg class="w-[22px] h-[20px]" viewBox="0 0 22 20"><path d="M0 2H8L10 4H22V19H0Z" fill="#f9c74f"/><path d="M0 1H8L10 3H0Z" fill="#e0a030"/><path d="M6 10H16V19H13V14H9V19H6Z" fill="#3f87c6"/></svg>
  </div>
  <div class="ml-[8px] w-[40px] h-full flex items-center justify-center">
    <svg class="w-[24px] h-[24px]" viewBox="0 0 24 24"><path d="M7 1H21V16H7Z" fill="#0f6cbd"/><path d="M14 1H21V8H14Z" fill="#28a8ea"/><path d="M7 13 16 18 24 13V23H7Z" fill="#1490df"/><path d="M0 6H12V18H0Z" fill="#0a5ca8"/><text x="2.500" y="16" font-size="11" font-weight="700" fill="#fff" font-family="Liberation Sans">O</text></svg>
  </div>
  <div class="ml-[10px] w-[40px] h-full flex items-center justify-center border-b-[2px] border-[#76b9ed]">
    <svg class="ml-[4px] w-[26px] h-[28px]" viewBox="0 0 26 28"><circle cx="11" cy="12" r="11" fill="#ea4335"/><path d="M11 12 20 6A11 11 0 0 1 15 22Z" fill="#fbbc05"/><path d="M11 12 15 22A11 11 0 0 1 1 16Z" fill="#34a853"/><circle cx="11" cy="12" r="5" fill="#4285f4" stroke="#fff"/><circle cx="17" cy="20" r="8" fill="#fff"/><path d="M12 20H22" stroke="#3f6fb5" stroke-dasharray="1.500 1"/></svg>
  </div>
  <div class="ml-[9px] w-[40px] h-full flex items-center justify-center border-b-[2px] border-[#76b9ed]">
    <svg class="w-[24px] h-[26px]" viewBox="0 0 24 26"><rect x="1" y="1" width="22" height="24" rx="4" fill="#222" stroke="#eee" stroke-width="1.500"/><path d="M23 8H16L13 5H8L4 9V17L8 21H13L16 18H23" fill="none" stroke="#fff" stroke-width="1.500"/><circle cx="11" cy="13" r="4.500" fill="#e0294f"/></svg>
  </div>
  <div class="ml-[5px] w-[48px] h-full flex items-center justify-center bg-[#4b5672] border-b-[2px] border-[#76b9ed]">
    <svg class="w-[24px] h-[24px]" viewBox="0 0 24 24"><path d="M6 0H24V24H6Z" fill="#185c37"/><path d="M15 0H24V6H15Z" fill="#33c481"/><path d="M15 6H24V12H15Z" fill="#21a366"/><path d="M6 0H15V6H6Z" fill="#21a366"/><path d="M6 6H15V12H6Z" fill="#107c41"/><path d="M0 6H12V19H0Z" fill="#107c41"/><text x="3" y="16.500" font-size="11" font-weight="700" fill="#fff" font-family="Liberation Sans">X</text></svg>
  </div>
  <svg class="ml-[1345px] w-[13px] h-[8px]" viewBox="0 0 13 8"><path d="M1 7 6.500 1.500 12 7" fill="none" stroke="#fff" stroke-width="1.200"/></svg>
  <svg class="ml-[10px] w-[17px] h-[15px]" viewBox="0 0 17 15"><path d="M3 .5H16.500V10.500H3M6 14.500H14M10 10.500V14.500M.5 2.500H4.500V6.500H.5Z" fill="none" stroke="#fff"/></svg>
  <svg class="ml-[7px] w-[17px] h-[16px]" viewBox="0 0 17 16"><path d="M1 5H3L6 2V12L3 9H1Z" fill="none" stroke="#fff"/><rect x="9" y="7" width="8" height="8" rx="1.500" fill="#e81123"/><path d="M11.300 9.300 14.700 12.700M14.700 9.300 11.300 12.700" stroke="#fff"/></svg>
  <div class="ml-[1px] w-[68px] text-center leading-[18px] text-[#e6e6e6]">8:06 AM<br>3/15/2022</div>
  <svg class="ml-[10px] w-[16px] h-[16px]" viewBox="0 0 16 16"><path d="M.5.5H15.500V12.500H10L8 15 6 12.500H.5Z" fill="none" stroke="#fff"/></svg>
  <span class="ml-[20px] w-px h-full bg-[#8088a0]"></span>
  <span class="absolute right-0 bottom-0 w-[6px] h-[8px] bg-black"></span>
</footer>
<div class="h-[13px] bg-white"></div>
</body>
</html>
